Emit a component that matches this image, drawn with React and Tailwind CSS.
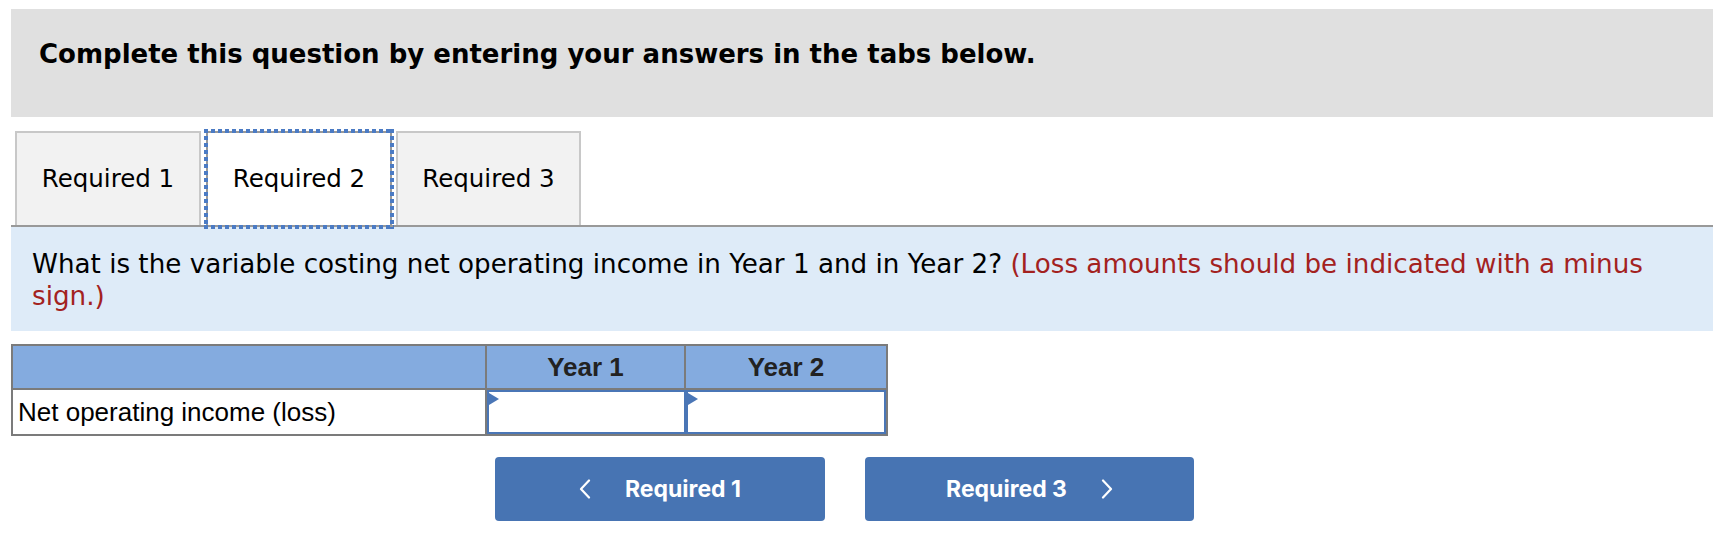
function Chevron({ dir }) {
  return (
    <svg width="12" height="20" viewBox="0 0 12 20" fill="none" className="shrink-0">
      <polyline
        points={dir === "left" ? "10,1.5 2,10 10,18.5" : "2,1.5 10,10 2,18.5"}
        stroke="white"
        strokeWidth="2.2"
        strokeLinecap="round"
        strokeLinejoin="round"
      />
    </svg>
  );
}

function AnswerCell() {
  return (
    <div className="relative h-full w-full border-2 border-[#4a76b6] bg-white">
      <span className="absolute left-0 top-[1px] h-0 w-0 border-y-[6px] border-l-[10px] border-y-transparent border-l-[#4a76b6]" />
    </div>
  );
}

function FocusFrame() {
  // dotted focus ring drawn as four strips so the dots stay square
  return (
    <>
      <span className="absolute -left-[4px] -right-[4px] -top-[4px] h-[4px] bg-[repeating-linear-gradient(90deg,#4b7bc4_0px,#4b7bc4_4px,transparent_4px,transparent_7px)]" />
      <span className="absolute -bottom-[4px] -left-[4px] -right-[4px] h-[4px] bg-[repeating-linear-gradient(90deg,#4b7bc4_0px,#4b7bc4_4px,transparent_4px,transparent_7px)]" />
      <span className="absolute -bottom-[4px] -left-[4px] -top-[4px] w-[4px] bg-[repeating-linear-gradient(180deg,#4b7bc4_0px,#4b7bc4_4px,transparent_4px,transparent_7px)]" />
      <span className="absolute -bottom-[4px] -right-[4px] -top-[4px] w-[4px] bg-[repeating-linear-gradient(180deg,#4b7bc4_0px,#4b7bc4_4px,transparent_4px,transparent_7px)]" />
    </>
  );
}

export default function App() {
  return (
    <div className="min-h-[539px] bg-white pl-[11px] pr-[10px] pt-[9px]" style={{ fontFamily: '"DejaVu Sans", Verdana, sans-serif' }}>
      <div className="h-[108px] bg-[#e0e0e0] pl-[28px] pt-[30px]">
        <h2 className="text-[26px] font-bold leading-[30px] text-black">
          Complete this question by entering your answers in the tabs below.
        </h2>
      </div>

      <div className="mt-[14px] flex pl-[4px] text-[24.5px] text-black">
        <div className="flex h-[94px] w-[186px] items-center justify-center border-2 border-b-0 border-[#c8c8c8] bg-[#f2f2f2]">
          Required 1
        </div>
        <div className="relative z-10 ml-[5px] flex h-[94px] w-[186px] items-center justify-center border-2 border-b-0 border-[#999] bg-white">
          Required 2
          <FocusFrame />
        </div>
        <div className="ml-[4px] flex h-[94px] w-[185px] items-center justify-center border-2 border-b-0 border-[#c8c8c8] bg-[#f2f2f2]">
          Required 3
        </div>
      </div>

      <div className="border-t-2 border-[#999] bg-[#deebf8] pb-[19px] pl-[21px] pr-[40px] pt-[21px] text-[26.2px] leading-[32px] text-black">
        What is the variable costing net operating income in Year 1 and in Year 2?{" "}
        <span className="text-[#a3221f]">(Loss amounts should be indicated with a minus sign.)</span>
      </div>

      <div
        className="mt-[13px] w-[877px] border-2 border-[#7b7b7b]"
        style={{ fontFamily: '"Liberation Sans", Arial, sans-serif' }}
      >
        <div className="flex h-[44px] border-b-2 border-[#7b7b7b] bg-[#84abdf] text-[26px] font-bold text-[#222]">
          <div className="w-[474px] border-r-2 border-[#7b7b7b]" />
          <div className="flex w-[199px] items-center justify-center border-r-2 border-[#7b7b7b]">Year 1</div>
          <div className="flex flex-1 items-center justify-center">Year 2</div>
        </div>
        <div className="flex h-[44px] text-[26px] text-black">
          <div className="flex w-[474px] items-center border-r-2 border-[#7b7b7b] bg-white pl-[5px]">
            Net operating income (loss)
          </div>
          <div className="w-[199px]">
            <AnswerCell />
          </div>
          <div className="flex-1">
            <AnswerCell />
          </div>
        </div>
      </div>

      <div
        className="ml-[484px] mt-[21px] flex gap-[40px] text-[23px] font-bold text-white"
        style={{ fontFamily: 'Inter, "Liberation Sans", sans-serif' }}
      >
        <button className="flex h-[64px] w-[330px] items-center justify-center gap-[34px] rounded-[4px] bg-[#4774b3]">
          <Chevron dir="left" />
          <span>Required 1</span>
        </button>
        <button className="flex h-[64px] w-[329px] items-center justify-center gap-[34px] rounded-[4px] bg-[#4774b3]">
          <span>Required 3</span>
          <Chevron dir="right" />
        </button>
      </div>
    </div>
  );
}
